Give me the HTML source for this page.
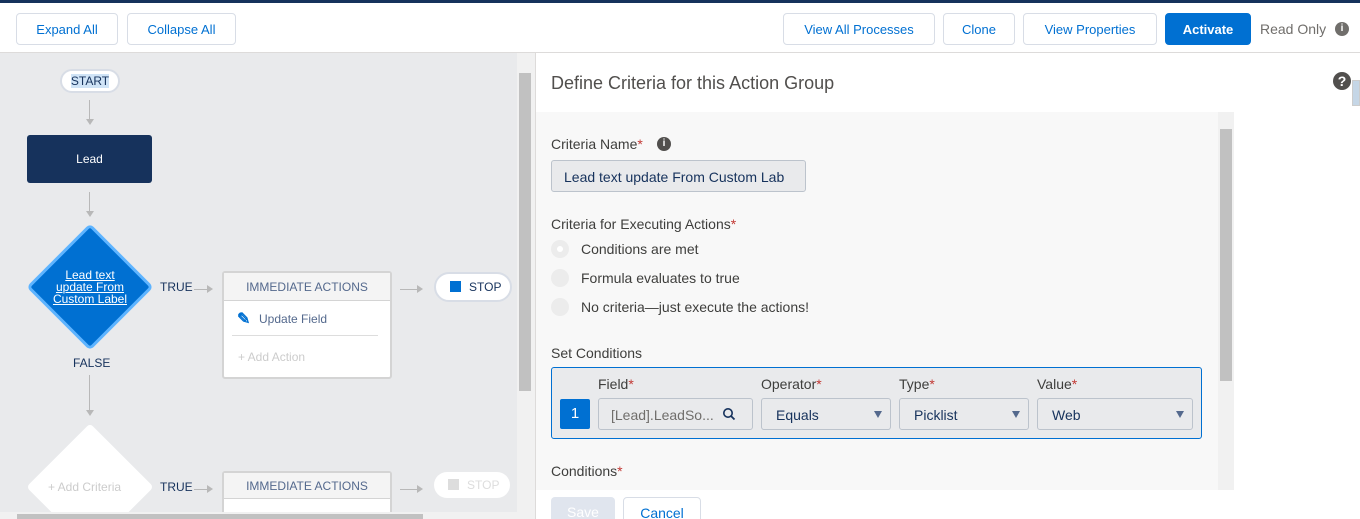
<!DOCTYPE html><html style="overflow:hidden"><head><style>
*{box-sizing:border-box;margin:0;padding:0}
html,body{width:1360px;height:519px;overflow:hidden}
body{font-family:"Liberation Sans",sans-serif;background:#fff;position:relative;font-size:13px}
.a{position:absolute}
.btn{position:absolute;top:13px;height:32px;border:1px solid #d8dde6;border-radius:4px;background:#fff;color:#0070d2;font-size:13px;display:flex;align-items:center;justify-content:center}
.lbl{position:absolute;font-size:14px;color:#3e3e3c}
.req{color:#c23934}
.radio{position:absolute;left:551px;width:18px;height:18px;border-radius:50%;background:#ececec}
.sel{position:absolute;top:398px;height:32px;background:#e9eaec;border:1px solid #bcc3cc;border-radius:3px;font-size:14px;color:#16325c;padding:8px 14px}
.tri{position:absolute;right:8px;top:12px;border-left:4px solid transparent;border-right:4px solid transparent;border-top:7px solid #54698d}
.gl{position:absolute;background:#b8b8b8}
.ah{position:absolute;width:0;height:0;border-top:4px solid transparent;border-bottom:4px solid transparent;border-left:6px solid #b8b8b8}
.av{position:absolute;width:0;height:0;border-left:4px solid transparent;border-right:4px solid transparent;border-top:6px solid #b8b8b8}
</style></head><body>
<div class="a" style="left:0;top:0;width:1360px;height:3px;background:#16325c"></div>
<div class="btn" style="left:16px;width:102px">Expand All</div>
<div class="btn" style="left:127px;width:109px">Collapse All</div>
<div class="btn" style="left:783px;width:152px">View All Processes</div>
<div class="btn" style="left:943px;width:72px">Clone</div>
<div class="btn" style="left:1023px;width:134px">View Properties</div>
<div class="btn" style="left:1165px;width:86px;background:#0070d2;border-color:#0070d2;color:#fff;font-weight:bold">Activate</div>
<div class="a" style="left:1260px;top:21px;color:#706e6b;font-size:14px">Read Only</div>
<div class="a" style="left:1335px;top:22px;width:14px;height:14px;border-radius:50%;background:#706e6b;color:#fff;font-size:10px;font-weight:bold;text-align:center;line-height:14px">i</div>
<div class="a" style="left:0;top:52px;width:1360px;height:1px;background:#dddbda"></div>
<!-- canvas -->
<div class="a" style="left:0;top:53px;width:535px;height:466px;background:#e9eaec;overflow:hidden">
 <div class="a" style="left:60px;top:16px;width:60px;height:24px;border:2px solid #d8dde6;border-radius:12px;background:#fff;color:#16325c;font-size:12px;text-align:center;line-height:20px"><span style="background:#cfe3f6">START</span></div>
 <div class="gl" style="left:89px;top:47px;width:1px;height:20px"></div><div class="av" style="left:86px;top:66px"></div>
 <div class="a" style="left:27px;top:82px;width:125px;height:48px;background:#16325c;border-radius:3px;color:#fff;font-size:12px;text-align:center;line-height:48px">Lead</div>
 <div class="gl" style="left:89px;top:139px;width:1px;height:20px"></div><div class="av" style="left:86px;top:158px"></div>
 <div class="a" style="left:45px;top:189px;width:90px;height:90px;transform:rotate(45deg);background:#0070d2;border:3px solid #5eb4ff;border-radius:5px"></div>
 <div class="a" style="left:50px;top:216px;width:80px;color:#fff;font-size:12px;text-align:center;line-height:12px;text-decoration:underline">Lead text update From Custom Label</div>
 <div class="a" style="left:160px;top:227px;color:#16325c;font-size:12px">TRUE</div>
 <div class="gl" style="left:194px;top:236px;width:14px;height:1px"></div><div class="ah" style="left:207px;top:232px"></div>
 <div class="a" style="left:222px;top:218px;width:170px;height:108px;border:2px solid #d4d4d4;border-radius:3px;background:#fff">
  <div style="height:28px;background:#f4f4f4;border-bottom:1px solid #d4d4d4;color:#54698d;font-size:12px;text-align:center;line-height:28px">IMMEDIATE ACTIONS</div>
  <div style="position:absolute;left:13px;top:36px;color:#0070d2;font-size:16px;font-weight:bold">✎</div>
  <div style="position:absolute;left:35px;top:39px;color:#54698d;font-size:12px">Update Field</div>
  <div style="position:absolute;left:8px;top:62px;width:146px;height:1px;background:#ddd"></div>
  <div style="position:absolute;left:14px;top:77px;color:#ccc;font-size:12px">+ Add Action</div>
 </div>
 <div class="gl" style="left:400px;top:236px;width:18px;height:1px"></div><div class="ah" style="left:417px;top:232px"></div>
 <div class="a" style="left:434px;top:219px;width:78px;height:30px;border:2px solid #d8dde6;border-radius:15px;background:#fff;color:#16325c;font-size:12px;line-height:26px;padding-left:14px"><span style="display:inline-block;width:11px;height:11px;background:#0070d2;vertical-align:-1px;margin-right:8px"></span>STOP</div>
 <div class="a" style="left:73px;top:303px;color:#16325c;font-size:12px">FALSE</div>
 <div class="gl" style="left:89px;top:322px;width:1px;height:36px"></div><div class="av" style="left:86px;top:357px"></div>
 <div class="a" style="left:45px;top:389px;width:90px;height:90px;transform:rotate(45deg);background:#fff;border-radius:4px"></div>
 <div class="a" style="left:48px;top:427px;color:#ccc;font-size:12px">+ Add Criteria</div>
 <div class="a" style="left:160px;top:427px;color:#16325c;font-size:12px">TRUE</div>
 <div class="gl" style="left:194px;top:436px;width:14px;height:1px"></div><div class="ah" style="left:207px;top:432px"></div>
 <div class="a" style="left:222px;top:418px;width:170px;height:60px;border:2px solid #d4d4d4;border-radius:3px;background:#fff">
  <div style="height:26px;background:#f4f4f4;border-bottom:1px solid #d4d4d4;color:#54698d;font-size:12px;text-align:center;line-height:26px">IMMEDIATE ACTIONS</div></div>
 <div class="gl" style="left:400px;top:436px;width:18px;height:1px"></div><div class="ah" style="left:417px;top:432px"></div>
 <div class="a" style="left:434px;top:419px;width:76px;height:26px;border-radius:13px;background:#fff;color:#ddd;font-size:12px;line-height:26px;padding-left:14px"><span style="display:inline-block;width:11px;height:11px;background:#ddd;vertical-align:-1px;margin-right:8px"></span>STOP</div>
 <div class="a" style="left:517px;top:0;width:18px;height:466px;background:#f1f1f1"></div>
 <div class="a" style="left:519px;top:20px;width:12px;height:318px;background:#c1c1c1"></div>
 <div class="a" style="left:0;top:459px;width:517px;height:7px;background:#f1f1f1"></div>
 <div class="a" style="left:17px;top:461px;width:406px;height:5px;background:#c1c1c1"></div>
</div>
<!-- right panel -->
<div class="a" style="left:535px;top:53px;width:1px;height:466px;background:#dddbda"></div>
<div class="a" style="left:551px;top:73px;font-size:18px;color:#514f4d">Define Criteria for this Action Group</div>
<div class="a" style="left:1333px;top:72px;width:18px;height:18px;border-radius:50%;background:#514f4d;color:#fff;font-weight:bold;font-size:14px;text-align:center;line-height:18px">?</div>
<div class="a" style="left:1352px;top:80px;width:8px;height:26px;background:#c5d6e6;border:1px solid #ccc"></div>
<div class="a" style="left:536px;top:112px;width:682px;height:378px;background:#f8f8f8"></div>
<div class="a" style="left:1218px;top:112px;width:16px;height:378px;background:#f1f1f1"></div>
<div class="a" style="left:1220px;top:129px;width:12px;height:252px;background:#c1c1c1"></div>
<div class="lbl" style="left:551px;top:136px">Criteria Name<span class="req">*</span></div>
<div class="a" style="left:657px;top:137px;width:14px;height:14px;border-radius:50%;background:#514f4d;color:#fff;font-size:10px;font-weight:bold;text-align:center;line-height:14px">i</div>
<div class="a" style="left:551px;top:160px;width:255px;height:32px;background:#e9eaec;border:1px solid #bcc3cc;border-radius:3px;font-size:14px;color:#16325c;padding:8px 12px;white-space:nowrap;overflow:hidden">Lead text update From Custom Lab</div>
<div class="lbl" style="left:551px;top:216px">Criteria for Executing Actions<span class="req">*</span></div>
<div class="radio" style="top:240px"><div style="position:absolute;left:6px;top:6px;width:6px;height:6px;border-radius:50%;background:#fff"></div></div><div class="lbl" style="left:581px;top:241px">Conditions are met</div>
<div class="radio" style="top:269px"></div><div class="lbl" style="left:581px;top:270px">Formula evaluates to true</div>
<div class="radio" style="top:298px"></div><div class="lbl" style="left:581px;top:299px">No criteria—just execute the actions!</div>
<div class="lbl" style="left:551px;top:345px">Set Conditions</div>
<div class="a" style="left:551px;top:367px;width:651px;height:72px;border:1px solid #0070d2;border-radius:3px;background:#e9eaec"></div>
<div class="lbl" style="left:598px;top:376px">Field<span class="req">*</span></div>
<div class="lbl" style="left:761px;top:376px">Operator<span class="req">*</span></div>
<div class="lbl" style="left:899px;top:376px">Type<span class="req">*</span></div>
<div class="lbl" style="left:1037px;top:376px">Value<span class="req">*</span></div>
<div class="a" style="left:560px;top:399px;width:30px;height:30px;background:#0070d2;border-radius:2px;color:#fff;font-size:15px;text-align:center;line-height:30px">1</div>
<div class="sel" style="left:598px;width:155px;padding-left:12px;color:#706e6b">[Lead].LeadSo...</div>
<svg class="a" style="left:722px;top:407px" width="14" height="14" viewBox="0 0 14 14"><circle cx="6" cy="6" r="4.2" fill="none" stroke="#16325c" stroke-width="1.6"/><path d="M9 9l3.5 3.5" stroke="#16325c" stroke-width="1.8"/></svg>
<div class="sel" style="left:761px;width:130px">Equals<div class="tri"></div></div>
<div class="sel" style="left:899px;width:130px">Picklist<div class="tri"></div></div>
<div class="sel" style="left:1037px;width:156px">Web<div class="tri"></div></div>
<div class="lbl" style="left:551px;top:463px">Conditions<span class="req">*</span></div>
<div class="a" style="left:551px;top:497px;width:64px;height:30px;background:#e0e5ee;border-radius:4px;color:#fff;font-size:14px;text-align:center;line-height:30px">Save</div>
<div class="a" style="left:623px;top:497px;width:78px;height:30px;background:#fff;border:1px solid #d8dde6;border-radius:4px;color:#0070d2;font-size:14px;text-align:center;line-height:30px">Cancel</div>
</body></html>
